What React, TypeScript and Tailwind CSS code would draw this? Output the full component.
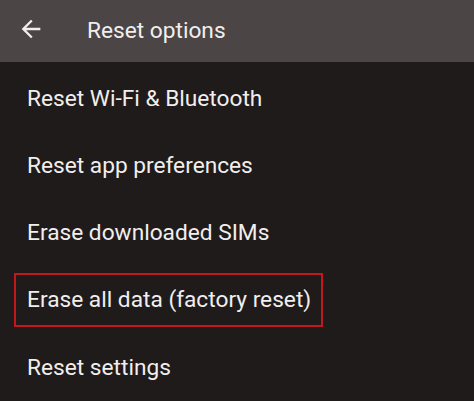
const items = [
  'Reset Wi-Fi & Bluetooth',
  'Reset app preferences',
  'Erase downloaded SIMs',
  'Erase all data (factory reset)',
  'Reset settings',
];

export default function App() {
  return (
    <div
      className="h-[401px] w-[474px] overflow-hidden bg-[#1f1b1b] text-[#f2eeee]"
      style={{ fontFamily: 'Roboto, "Liberation Sans", sans-serif' }}
    >
      <div className="flex h-[62px] items-center bg-[#4b4545]">
        <svg viewBox="0 0 24 24" className="mb-[5px] ml-[17px] h-[28px] w-[28px] fill-[#f2eeee]">
          <path d="M20 11H7.83l5.59-5.59L12 4l-8 8 8 8 1.41-1.41L7.83 13H20v-2z" />
        </svg>
        <h1 className="ml-[42px] text-[22.7px] leading-none">Reset options</h1>
      </div>

      <ul className="pt-[3px]">
        {items.map((label, i) => (
          <li key={label} className="flex h-[67.25px] items-center">
            {i === 3 ? (
              <div className="ml-[14px] flex h-[54px] w-[309px] items-center border-2 border-[#c4161d] pl-[11px] text-[22.7px]">
                {label}
              </div>
            ) : (
              <span className="ml-[27px] text-[22.7px]">{label}</span>
            )}
          </li>
        ))}
      </ul>
    </div>
  );
}
